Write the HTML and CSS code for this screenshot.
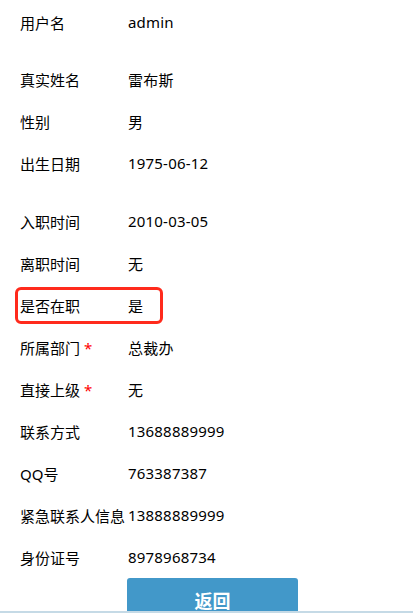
FILE: index.html
```html
<!DOCTYPE html>
<html lang="zh-CN">
<head>
    <meta charset="UTF-8">
    <title>员工信息</title>
    <link rel="stylesheet" href="styles.css">
</head>
<body>
    <div class="info">
        <div class="row"><span class="label">用户名</span><span class="value">admin</span></div>
        <div class="row gap"><span class="label">真实姓名</span><span class="value">雷布斯</span></div>
        <div class="row"><span class="label">性别</span><span class="value">男</span></div>
        <div class="row"><span class="label">出生日期</span><span class="value">1975-06-12</span></div>
        <div class="row gap wide"><span class="label">入职时间</span><span class="value">2010-03-05</span></div>
        <div class="row"><span class="label">离职时间</span><span class="value">无</span></div>
        <div class="row marked"><span class="label">是否在职</span><span class="value">是</span></div>
        <div class="row"><span class="label">所属部门 <em class="req">*</em></span><span class="value">总裁办</span></div>
        <div class="row"><span class="label">直接上级 <em class="req">*</em></span><span class="value">无</span></div>
        <div class="row"><span class="label">联系方式</span><span class="value">13688889999</span></div>
        <div class="row"><span class="label">QQ号</span><span class="value">763387387</span></div>
        <div class="row"><span class="label">紧急联系人信息</span><span class="value">13888889999</span></div>
        <div class="row"><span class="label">身份证号</span><span class="value">8978968734</span></div>
        <div class="actions">
            <button class="back-btn" type="button">返回</button>
        </div>
    </div>
    <div class="bottom-line"></div>
</body>
</html>
```

FILE: styles.css
```css
body {
    margin: 0;
    background-color: #ffffff;
    color: #000000;
    font-family: "Noto Sans", "Noto Sans CJK SC", sans-serif;
    font-size: 15px;
}
.info {
    padding: 1px 0 0 20px;
}
.row {
    display: flex;
    align-items: center;
    height: 42px;
    position: relative;
}
.row.gap {
    margin-top: 15px;
}
.row.wide {
    margin-top: 16px;
}
.label {
    width: 108px;
    white-space: nowrap;
}
.value {
    letter-spacing: 0.2px;
}
.req {
    color: #ff0000;
    font-style: normal;
}
.marked::after {
    content: "";
    position: absolute;
    left: -5px;
    top: 3px;
    width: 142px;
    height: 31px;
    border: 3px solid #ff2a1c;
    border-radius: 6px;
}
.actions {
    padding-left: 107px;
}
.back-btn {
    width: 171px;
    height: 44px;
    border: none;
    border-radius: 3px;
    background-color: #4298c9;
    color: #ffffff;
    font-family: "Noto Sans CJK SC", sans-serif;
    font-size: 18px;
    font-weight: bold;
    cursor: pointer;
}
.bottom-line {
    position: fixed;
    left: 0;
    right: 0;
    bottom: 0;
    height: 2px;
    background-color: #c5dae6;
}
```
